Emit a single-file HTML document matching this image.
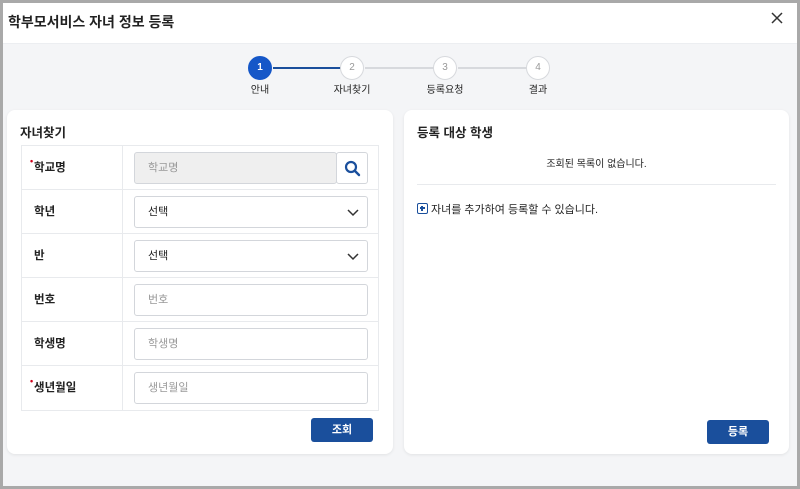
<!DOCTYPE html>
<html><head><meta charset="utf-8"><style>
*{box-sizing:border-box;margin:0;padding:0}
body{width:800px;height:489px;background:#a9a9a9;font-family:"Liberation Sans","Noto Sans CJK KR",sans-serif;position:relative;overflow:hidden;color:#222}
.win{position:absolute;left:3px;top:3px;width:794px;height:483px;background:#f4f5f7}
.hd{position:absolute;left:0;top:0;width:794px;height:41px;background:#fff;border-bottom:1px solid #eceef1}
.hd h1{position:absolute;left:5px;top:9px;font-size:14px;font-weight:bold;color:#222}
.x{position:absolute;right:12px;top:7px}
.st{position:absolute;font-size:10px;color:#222;text-align:center;width:60px}
.c{position:absolute;width:24px;height:24px;border-radius:50%;border:1.5px solid #d7d9dd;background:#fff;font-size:10px;color:#999;text-align:center;line-height:21px}
.c.on{background:#1557c8;border-color:#1557c8;color:#fff;font-weight:bold}
.ln{position:absolute;height:2px;background:#d7d9dd;top:64px}
.card{position:absolute;top:107px;height:344px;background:#fff;border-radius:8px;box-shadow:0 1px 3px rgba(0,0,0,.08)}
.card h2{position:absolute;left:13px;top:12px;font-size:12.5px;font-weight:bold}
.tb{position:absolute;left:14px;top:35px;width:358px;border:1px solid #e8eaed}
.row{height:44px;border-bottom:1px solid #e8eaed;position:relative}
.row:last-child{border-bottom:none}
.lb{position:absolute;left:0;top:0;width:101px;height:100%;border-right:1px solid #e8eaed;font-size:11.5px;font-weight:bold;padding-left:12px;line-height:44px}
.lb i{color:#d0021b;font-style:normal;font-size:9px;position:absolute;left:8px;top:-7px}
.in{position:absolute;left:112px;top:6px;width:234px;height:32px;border:1px solid #d3d6db;border-radius:3px;font-size:11px;color:#999;padding-left:13px;line-height:30px;background:#fff}
.sel{color:#222}
.btn{position:absolute;width:62px;height:24px;background:#1a4f9c;border-radius:3px;color:#fff;font-size:11px;font-weight:bold;text-align:center;line-height:24px}
</style></head><body><div class="win">
<div class="hd"><h1>학부모서비스 자녀 정보 등록</h1><svg class="x" width="16" height="16"><path d="M3 3l10 10M13 3L3 13" stroke="#333" stroke-width="1.5"/></svg></div>
<div class="ln" style="left:270px;width:70px;background:#1a4f9c"></div>
<div class="ln" style="left:362px;width:71px"></div>
<div class="ln" style="left:455px;width:71px"></div>
<div class="c on" style="left:245px;top:53px">1</div>
<div class="c" style="left:337px;top:53px">2</div>
<div class="c" style="left:430px;top:53px">3</div>
<div class="c" style="left:523px;top:53px">4</div>
<div class="st" style="left:227px;top:78px">안내</div>
<div class="st" style="left:319px;top:78px">자녀찾기</div>
<div class="st" style="left:412px;top:78px">등록요청</div>
<div class="st" style="left:505px;top:78px">결과</div>
<div class="card" style="left:4px;width:386px"><h2>자녀찾기</h2>
<div class="tb">
<div class="row"><div class="lb"><i>•</i>학교명</div><div class="in" style="background:#efefef;width:203px">학교명</div><div class="in" style="left:314px;width:32px;padding:0"><svg width="30" height="30" viewBox="0 0 30 30"><circle cx="14" cy="14" r="5" fill="none" stroke="#1a4f9c" stroke-width="2.2"/><path d="M18 18l4 4" stroke="#1a4f9c" stroke-width="2.4" stroke-linecap="round"/></svg></div></div>
<div class="row"><div class="lb">학년</div><div class="in sel">선택<svg style="position:absolute;right:8px;top:10px" width="12" height="10"><path d="M1 3l5 5 5-5" fill="none" stroke="#333" stroke-width="1.5"/></svg></div></div>
<div class="row"><div class="lb">반</div><div class="in sel">선택<svg style="position:absolute;right:8px;top:10px" width="12" height="10"><path d="M1 3l5 5 5-5" fill="none" stroke="#333" stroke-width="1.5"/></svg></div></div>
<div class="row"><div class="lb">번호</div><div class="in">번호</div></div>
<div class="row"><div class="lb">학생명</div><div class="in">학생명</div></div>
<div class="row"><div class="lb"><i>•</i>생년월일</div><div class="in">생년월일</div></div>
</div>
<div class="btn" style="left:304px;top:308px">조회</div></div>
<div class="card" style="left:401px;width:385px"><h2>등록 대상 학생</h2>
<div style="position:absolute;left:0;width:100%;top:45px;text-align:center;font-size:10px">조회된 목록이 없습니다.</div>
<div style="position:absolute;left:13px;right:13px;top:74px;height:1px;background:#e8eaed"></div>
<div style="position:absolute;left:13px;top:91px;font-size:11px"><span style="display:inline-block;width:11px;height:11px;border:1.5px solid #1a4f9c;border-radius:2px;vertical-align:-1px;position:relative;margin-right:3px"><span style="position:absolute;left:1.5px;top:3.3px;width:5px;height:1.4px;background:#1a4f9c"></span><span style="position:absolute;left:3.3px;top:1.5px;width:1.4px;height:5px;background:#1a4f9c"></span></span>자녀를 추가하여 등록할 수 있습니다.</div>
<div class="btn" style="left:303px;top:310px">등록</div></div>
</div></body></html>
